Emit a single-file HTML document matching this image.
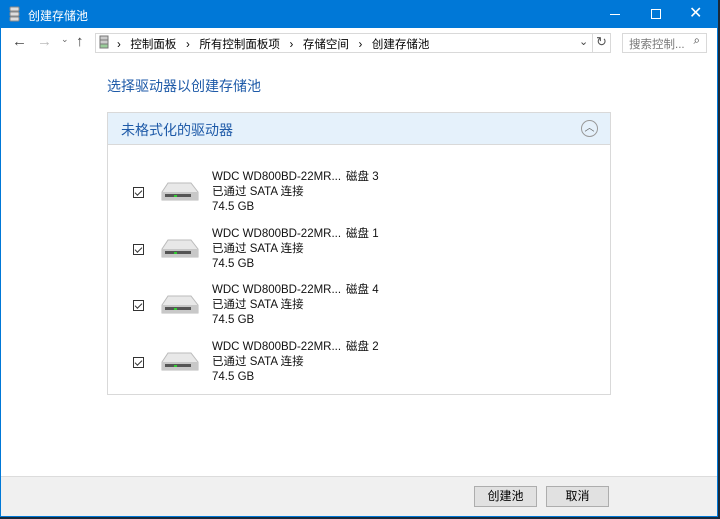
<!DOCTYPE html>
<html><head><meta charset="utf-8"><style>
*{margin:0;padding:0;box-sizing:border-box}
body{width:720px;height:519px;background:#1a2a3a;position:relative;overflow:hidden;font-family:"Liberation Sans","Noto Sans CJK SC",sans-serif;font-size:12px;color:#000}
.win{position:absolute;left:0;top:0;width:718px;height:517px;background:#0078d7;}
.in{position:absolute;left:1px;top:28px;width:716px;height:488px;background:#fff}
.t{position:absolute;color:#fff;font-size:12px;left:28px;top:7px}
.a{position:absolute}
.foot{position:absolute;left:0;top:448px;width:716px;height:40px;background:#f0f0f0;border-top:1px solid #dcdcdc}
.btn{position:absolute;top:9px;width:63px;height:21px;border:1px solid #adadad;background:#e1e1e1;text-align:center;line-height:19px;font-size:12px}
.cb{position:absolute;width:11px;height:11px;border:1px solid #333;left:25px}
.cb:after{content:"";position:absolute;width:6px;height:3px;border-left:1px solid #333;border-bottom:1px solid #333;transform:rotate(-45deg);top:2px;left:1px}
.txt{position:absolute;left:104px;line-height:15px;font-size:11.5px;color:#111;white-space:nowrap}
</style></head><body>
<div class="win">
<svg class="a" style="left:9px;top:6px" width="11" height="16"><rect x="1" y="1" width="9" height="4" rx="1" fill="#ddd" stroke="#888"/><rect x="1" y="6" width="9" height="4" rx="1" fill="#ddd" stroke="#888"/><rect x="1" y="11" width="9" height="4" rx="1" fill="#ddd" stroke="#888"/></svg>
<div class="t">创建存储池</div>
<div class="a" style="left:610px;top:14px;width:10px;height:1px;background:#fff"></div>
<div class="a" style="left:651px;top:9px;width:10px;height:10px;border:1px solid #fff"></div>
<div class="a" style="left:689px;top:3px;color:#fff;font-size:16px">✕</div>
<div class="in">
 <div class="a" style="left:11px;top:5px;font-size:15px;color:#444">←</div>
 <div class="a" style="left:36px;top:5px;font-size:15px;color:#bbb">→</div>
 <div class="a" style="left:60px;top:6px;font-size:9px;color:#666">⌄</div>
 <div class="a" style="left:75px;top:5px;font-size:15px;color:#444">↑</div>
 <div class="a" style="left:94px;top:5px;width:516px;height:20px;border:1px solid #d9d9d9"></div>
 <svg class="a" style="left:98px;top:7px" width="10" height="15"><rect x="1" y="1" width="8" height="4" fill="#ccc" stroke="#777"/><rect x="1" y="5" width="8" height="4" fill="#ccc" stroke="#777"/><rect x="1" y="9" width="8" height="4" fill="#9c9" stroke="#777"/></svg>
 <div class="a" style="left:116px;top:8px;font-size:11.5px;white-space:nowrap">›&nbsp;&nbsp; 控制面板 &nbsp;&nbsp;›&nbsp;&nbsp; 所有控制面板项 &nbsp;&nbsp;›&nbsp;&nbsp; 存储空间 &nbsp;&nbsp;›&nbsp;&nbsp; 创建存储池</div>
 <div class="a" style="left:578px;top:7px;font-size:11px;color:#444">⌄</div>
 <div class="a" style="left:591px;top:5px;width:1px;height:20px;background:#d9d9d9"></div>
 <div class="a" style="left:595px;top:6px;font-size:13px;color:#555">↻</div>
 <div class="a" style="left:621px;top:5px;width:85px;height:20px;border:1px solid #d9d9d9;color:#777;font-size:11.5px;padding:2px 0 0 6px">搜索控制... <span style="position:absolute;right:6px;top:1px;color:#333">⌕</span></div>
 <div class="a" style="left:106px;top:48px;font-size:14px;color:#1e5aa8">选择驱动器以创建存储池</div>
 <div class="a" style="left:106px;top:84px;width:504px;height:283px;border:1px solid #d9d9d9">
  <div style="position:absolute;left:0;top:0;width:502px;height:32px;background:#e5f1fb;border-bottom:1px solid #d9d9d9"></div>
  <div class="a" style="left:13px;top:7px;font-size:14px;color:#1e5aa8">未格式化的驱动器</div>
  <div class="a" style="left:473px;top:7px;width:17px;height:17px;border:1px solid #999;border-radius:50%;text-align:center;font-size:10px;line-height:16px;color:#666">︿</div>
  <div id="rows"></div>
 </div>
 <div class="foot">
  <div class="btn" style="left:473px">创建池</div>
  <div class="btn" style="left:545px">取消</div>
 </div>
</div>
</div>
<script>
var d=[3,1,4,2],h="";
d.forEach(function(n,i){var y=58+i*56.5;
h+='<div class="cb" style="top:'+(y+16)+'px"></div>';
h+='<svg class="a" style="left:52px;top:'+(y+10)+'px" width="40" height="22"><path d="M8 2 L31 2 L38 11 L38 19 L2 19 L2 11 Z" fill="#e8e8e8" stroke="#bbb"/><rect x="2" y="11" width="36" height="8" fill="#c8c8c8"/><rect x="5" y="13" width="26" height="3" fill="#555"/><rect x="14" y="14" width="3" height="2" fill="#3c3"/></svg>';
h+='<div class="txt" style="top:'+(y-1)+'px">WDC WD800BD-22MR...<span style="position:absolute;left:134px">磁盘 '+n+'</span><br>已通过 SATA 连接<br>74.5 GB</div>';});
document.getElementById('rows').innerHTML=h;
</script>
</body></html>
